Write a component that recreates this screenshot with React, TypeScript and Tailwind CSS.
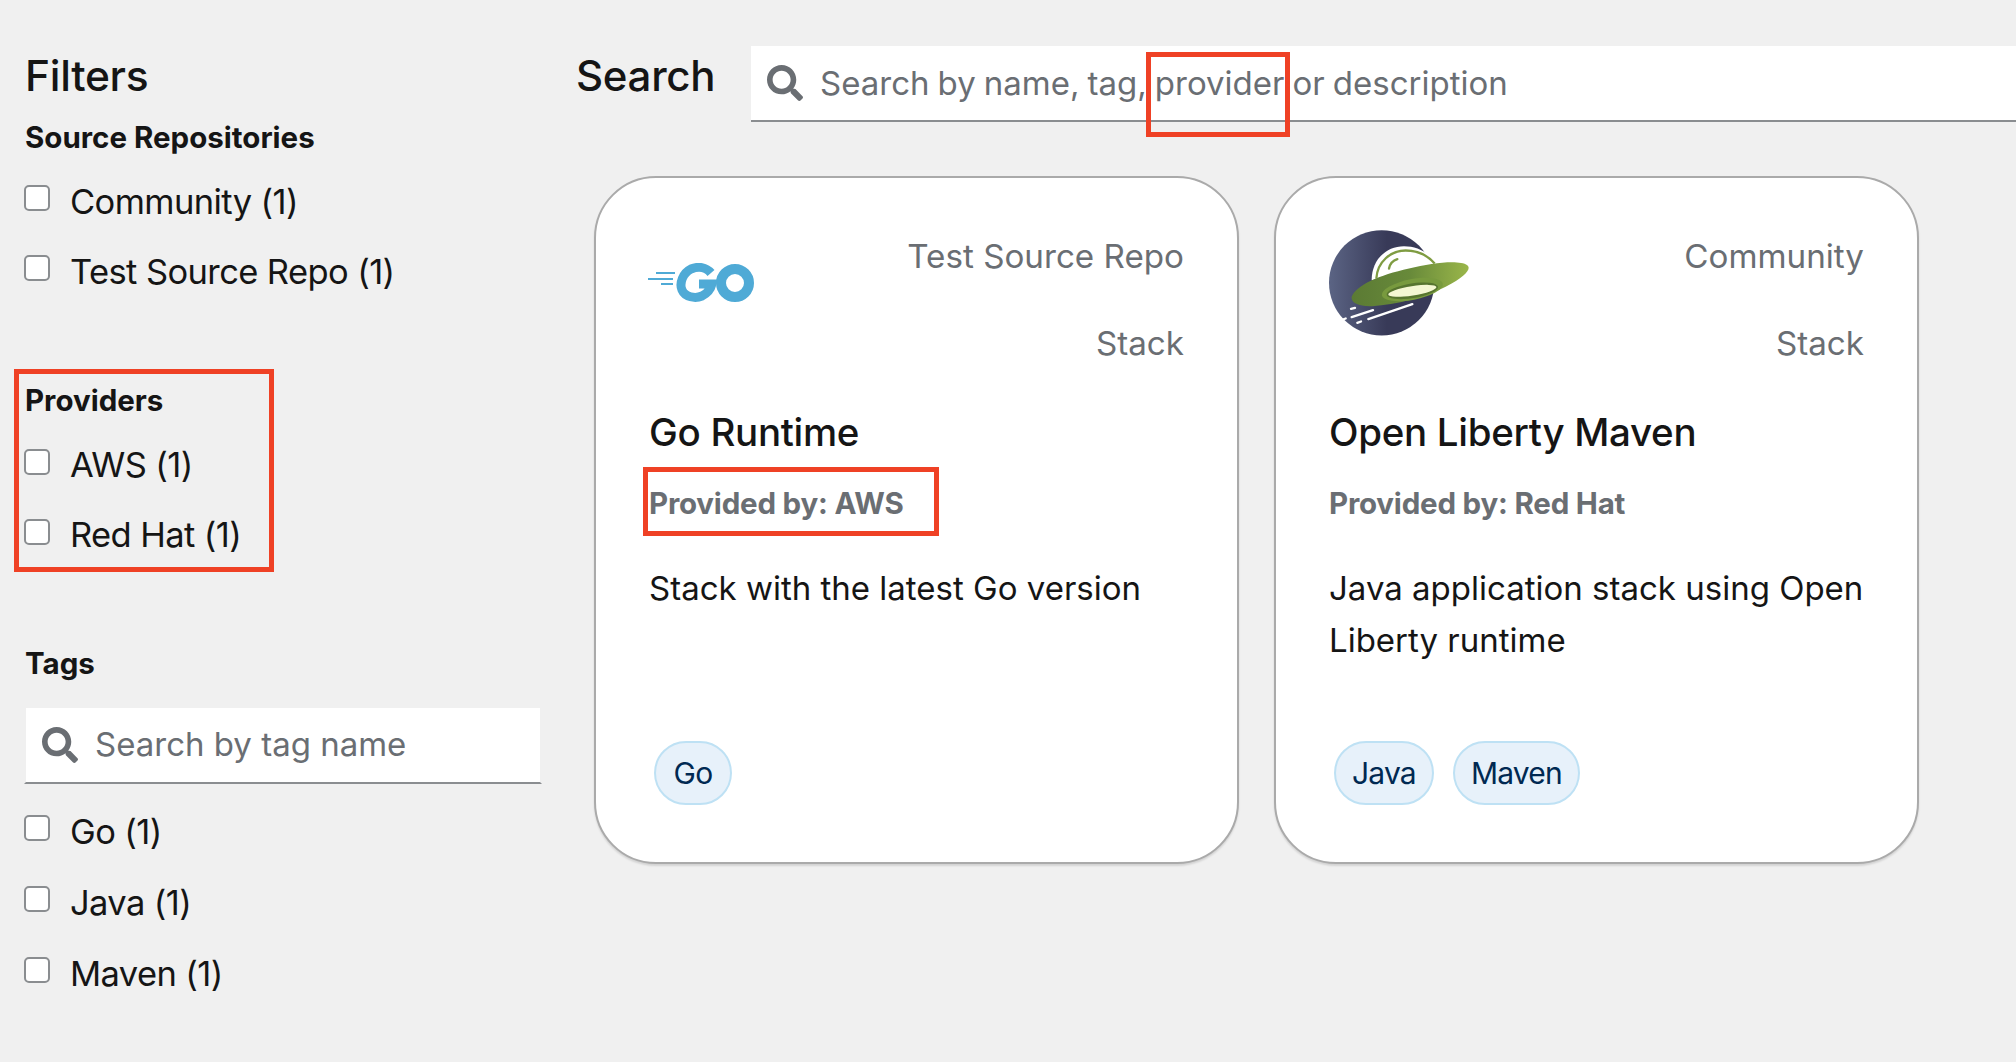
import { FaSearch } from "react-icons/fa";

function FilterRow({ label }: { label: string }) {
  return (
    <label className="flex h-[70px] items-start gap-[20px] text-[34.5px] leading-[38px] tracking-[-0.6px] text-[#151515]">
      <input
        type="checkbox"
        className="mt-[2px] h-[26px] w-[26px] shrink-0 appearance-none rounded-[5px] border-2 border-[#8a8d90] bg-white"
      />
      <span>{label}</span>
    </label>
  );
}

function GoLogo() {
  return (
    <svg width="106" height="40" viewBox="0 0 106 40" fill="none" className="mt-[27px] -ml-px">
      <path d="M8 10H27M0 16H25M13 21H25" stroke="#4faad6" strokeWidth="2" />
      <path
        d="M63 10C58 4 50 3 43 6C35 10 31 20 34 27C37 34 47 36 54 33C60 30 63 25 64 21H51"
        stroke="#4faad6"
        strokeWidth="9"
      />
      <ellipse cx="87" cy="20" rx="14" ry="14" stroke="#4faad6" strokeWidth="10" />
    </svg>
  );
}

function LibertyLogo() {
  return (
    <svg width="140" height="107" viewBox="180 180 420 320" className="mt-[-6px]">
      <defs>
        <linearGradient id="planet" x1="0" x2="1" y1="0" y2="0">
          <stop offset="0" stopColor="#5b6484" />
          <stop offset="0.55" stopColor="#383a58" />
          <stop offset="1" stopColor="#383a58" />
        </linearGradient>
        <linearGradient id="saucer" x1="0" x2="1" y1="0" y2="0">
          <stop offset="0" stopColor="#5b7a34" />
          <stop offset="0.5" stopColor="#688a3a" />
          <stop offset="1" stopColor="#9ab64a" />
        </linearGradient>
      </defs>
      <circle cx="338" cy="338" r="158" fill="url(#planet)" />
      <path d="M308 330C308 270 350 228 405 228C445 228 480 245 510 290Z" fill="#fff" />
      <path d="M322 325C325 275 365 241 410 241C445 241 475 255 497 280" fill="none" stroke="#7f9c42" strokeWidth="7" />
      <path d="M360 295C363 281 372 271 385 267" fill="none" stroke="#7f9c42" strokeWidth="7" strokeLinecap="round" />
      <path
        d="M248 380C262 345 330 315 420 295C490 278 570 268 595 285C608 295 590 320 530 350C470 380 380 405 310 408C270 410 245 398 248 380Z"
        fill="url(#saucer)"
      />
      <ellipse cx="430" cy="358" rx="93" ry="31" fill="#789a3e" transform="rotate(-11 430 358)" />
      <ellipse cx="430" cy="362" rx="78" ry="22" fill="#57752f" transform="rotate(-9 430 362)" />
      <ellipse cx="430" cy="362" rx="73" ry="14" fill="#f4f7d2" transform="rotate(-9 430 362)" />
      <g stroke="#fff" strokeWidth="7" strokeLinecap="round" fill="none">
        <path d="M246 416L258 413" />
        <path d="M248 441L312 420" />
        <path d="M298 447L430 402" />
        <path d="M265 458L276 454" />
        <path d="M222 448L230 445" />
      </g>
    </svg>
  );
}

function Tag({ label }: { label: string }) {
  return (
    <span className="flex h-16 min-w-[78px] items-center justify-center rounded-full border-2 border-[#bee1f4] bg-[#e7f1fa] px-4 text-[30px] tracking-[-0.8px] text-[#002952]">
      {label}
    </span>
  );
}

function Card({
  logo,
  source,
  title,
  provider,
  description,
  tags,
  highlight,
}: {
  logo: React.ReactNode;
  source: string;
  title: string;
  provider: string;
  description: string;
  tags: string[];
  highlight?: boolean;
}) {
  return (
    <div className="flex h-[688px] w-[645px] shrink-0 flex-col rounded-[62px] border-2 border-[#aaaaaa] bg-white pt-[58px] pr-[53px] pb-[57px] pl-[53px] shadow-[0_2px_2px_rgba(0,0,0,0.12)]">
      <div className="flex items-start justify-between">
        {logo}
        <div className="flex flex-col items-end gap-[47px] text-[33.2px] leading-[40px] text-[#6a6e73]">
          <span>{source}</span>
          <span>Stack</span>
        </div>
      </div>
      <h3 className="mt-[44px] text-[38.5px] leading-[50px] font-medium tracking-[-0.3px] text-[#151515]">{title}</h3>
      <div className="relative mt-[26px] text-[29.5px] leading-[40px] font-bold tracking-[-0.2px] text-[#6a6e73]">
        Provided by: {provider}
        {highlight && (
          <div className="absolute top-[-16px] left-[-6px] h-[69px] w-[296px] border-[5px] border-[#ef4125]" />
        )}
      </div>
      <p className="mt-[39px] text-[33px] leading-[52px] text-[#151515]">{description}</p>
      <div className="mt-auto ml-[5px] flex gap-[19px]">
        {tags.map((tag) => (
          <Tag key={tag} label={tag} />
        ))}
      </div>
    </div>
  );
}

export default function App() {
  return (
    <div className="flex h-[1062px] w-[2016px] overflow-hidden bg-[#f0f0f0] font-[Inter,sans-serif]">
      <aside className="ml-[24px] w-[518px] shrink-0 pt-[51px]">
        <h2 className="ml-px text-[42.5px] leading-[50px] font-medium tracking-[-0.3px] text-[#151515]">Filters</h2>

        <h4 className="mt-[16px] ml-px text-[29.5px] leading-[40px] font-bold text-[#151515]">Source Repositories</h4>
        <div className="mt-[26px]">
          <FilterRow label="Community (1)" />
          <FilterRow label="Test Source Repo (1)" />
        </div>

        <div className="relative mt-[57px]">
          <h4 className="ml-px text-[29.5px] leading-[40px] font-bold text-[#151515]">Providers</h4>
          <div className="mt-[26px] [&_input]:mt-[3px]">
            <FilterRow label="AWS (1)" />
            <FilterRow label="Red Hat (1)" />
          </div>
          <div className="absolute top-[-11px] left-[-10px] h-[203px] w-[260px] border-[5px] border-[#ef4125]" />
        </div>

        <h4 className="mt-[57px] ml-px text-[29.5px] leading-[40px] font-bold text-[#151515]">Tags</h4>
        <div className="mt-[25px] flex h-[76px] items-center gap-[17px] border-x-2 border-b-2 border-x-[#f0f0f0] border-b-[#8a8d90] bg-white pl-[16px]">
          <FaSearch className="h-9 w-9 shrink-0 text-[#6a6e73]" />
          <input
            className="min-w-0 flex-1 bg-transparent text-[33px] outline-none placeholder:text-[#6a6e73]"
            placeholder="Search by tag name"
          />
        </div>
        <div className="mt-[29px] flex flex-col gap-px">
          <FilterRow label="Go (1)" />
          <FilterRow label="Java (1)" />
          <FilterRow label="Maven (1)" />
        </div>
      </aside>

      <main className="ml-[34px] min-w-0 flex-1 pt-[46px]">
        <div className="flex items-start">
          <h2 className="mt-[5px] w-[175px] shrink-0 text-[42px] leading-[50px] font-medium tracking-[-0.3px] text-[#151515]">
            Search
          </h2>
          <div className="relative flex h-[76px] flex-1 items-center gap-[17px] border-b-2 border-b-[#8a8d90] bg-white pl-[16px]">
            <FaSearch className="h-9 w-9 shrink-0 text-[#6a6e73]" />
            <input
              className="min-w-0 flex-1 bg-transparent pt-[2px] text-[33px] [word-spacing:-1.2px] outline-none placeholder:text-[#6a6e73]"
              placeholder="Search by name, tag, provider or description"
            />
            <div className="absolute top-[6px] left-[395px] h-[85px] w-[144px] border-[5px] border-[#ef4125]" />
          </div>
        </div>

        <div className="mt-[54px] ml-[18px] flex gap-[35px]">
          <Card
            logo={<GoLogo />}
            source="Test Source Repo"
            title="Go Runtime"
            provider="AWS"
            description="Stack with the latest Go version"
            tags={["Go"]}
            highlight
          />
          <Card
            logo={<LibertyLogo />}
            source="Community"
            title="Open Liberty Maven"
            provider="Red Hat"
            description="Java application stack using Open Liberty runtime"
            tags={["Java", "Maven"]}
          />
        </div>
      </main>
    </div>
  );
}
